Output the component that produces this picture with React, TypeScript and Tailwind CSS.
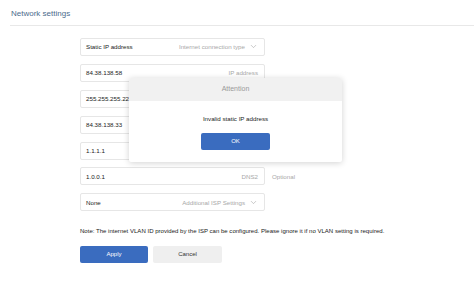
import { ChevronDown } from "lucide-react"

const rows = [
    { value: "Static IP address", label: "Internet connection type", select: true },
    { value: "84.38.138.58", label: "IP address" },
    { value: "255.255.255.224", label: "Subnet mask" },
    { value: "84.38.138.33", label: "Default gateway" },
    { value: "1.1.1.1", label: "DNS1" },
    { value: "1.0.0.1", label: "DNS2", note: "Optional" },
    { value: "None", label: "Additional ISP Settings", select: true },
]

function Field({ value, label, select, note }: { value: string; label: string; select?: boolean; note?: string }) {
    return (
        <div className="flex items-center">
            <div className="flex items-center justify-between w-[185px] h-[18px] pl-[5px] pr-[6px] rounded-[2px] border border-[#e6e6e6] bg-white">
                <span className="text-[6.2px] text-[#222]">{value}</span>
                <span className="flex items-center gap-[4px] text-[6.2px] text-[#a8a8a8]">
                    {label}
                    {select && <ChevronDown className="w-[9px] h-[9px] text-[#a0a0a0]" strokeWidth={1.5} />}
                </span>
            </div>
            {note && <span className="ml-[7px] text-[6.2px] text-[#a8a8a8]">{note}</span>}
        </div>
    )
}

export default function App() {
    return (
        <div className="relative w-[474px] h-[281px] bg-white overflow-hidden" style={{ fontFamily: '"Liberation Sans", Arial, sans-serif' }}>
            <div className="pl-[11px] pt-[8px] h-[25px] text-[8px] text-[#4b6b8c]">Network settings</div>
            <div className="ml-[10px] h-px bg-[#e8e8e8]" />

            <div className="pl-[80px] pt-[12px]">
                <div className="flex flex-col gap-[7.9px]">
                    {rows.map((row) => (
                        <Field key={row.value} {...row} />
                    ))}
                </div>

                <p className="mt-[16px] text-[6.05px] text-[#222]">
                    Note: The internet VLAN ID provided by the ISP can be configured. Please ignore it if no VLAN setting is required.
                </p>

                <div className="mt-[10px] flex gap-[5px]">
                    <button className="w-[68px] h-[17px] rounded-[2px] bg-[#3a6cbf] text-white text-[6px]">Apply</button>
                    <button className="w-[69px] h-[17px] rounded-[2px] bg-[#efefef] text-[#333] text-[6px]">Cancel</button>
                </div>
            </div>

            {/* Dialog */}
            <div className="absolute left-[129px] top-[78px] w-[213px] h-[84px] bg-white rounded-[2px] shadow-[0_1px_6px_rgba(0,0,0,0.18)] flex flex-col overflow-hidden">
                <div className="h-[23px] bg-[#f1f1f1] flex items-center justify-center text-[7px] text-[#9a9a9a]">Attention</div>
                <div className="flex flex-col items-center pt-[13px]">
                    <span className="text-[6.2px] text-[#222]">Invalid static IP address</span>
                    <button className="mt-[10px] w-[69px] h-[17px] rounded-[2px] bg-[#3a6cbf] text-white text-[6px]">OK</button>
                </div>
            </div>
        </div>
    )
}
